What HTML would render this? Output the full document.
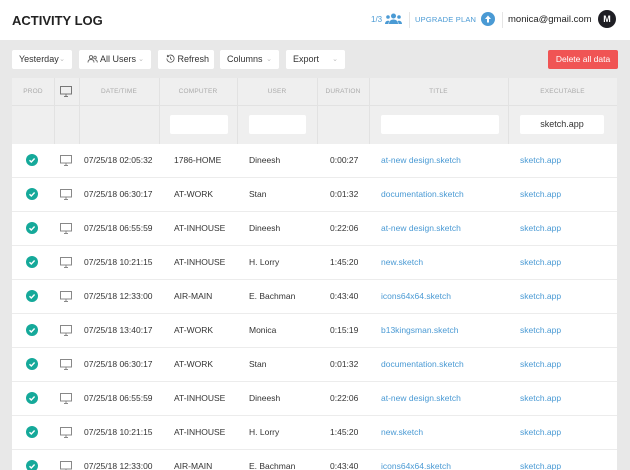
<!DOCTYPE html>
<html style="width:630px;height:470px;overflow:hidden"><head><meta charset="utf-8"><style>
*{box-sizing:border-box;margin:0;padding:0}
body{width:630px;height:470px;overflow:hidden;background:#e8e8e8;font-family:"Liberation Sans",sans-serif;position:relative}
.hdr{position:absolute;left:0;top:0;width:630px;height:40px;background:#fff}
.abs{position:absolute}
.btn{position:absolute;top:50px;height:19px;background:#fff;border-radius:2px;font-size:9px;color:#333;line-height:19px;padding-left:7px}
.btn .c{position:absolute;right:7px;top:0;color:#bbb;font-size:7px}
.tbl{position:absolute;left:12px;top:78px;width:605px;height:392px;background:#fff;overflow:hidden}
.thead{position:absolute;left:0;top:0;width:605px;height:66px;background:#efefef}
.th{position:absolute;top:0;height:27px;line-height:27px;font-size:6.5px;color:#aaa;text-align:center;letter-spacing:.2px}
.vl{position:absolute;top:0;width:1px;height:66px;background:#e2e2e2}
.inp{position:absolute;top:37px;height:19px;background:#fff;border-radius:2px;font-size:9px;text-align:center;line-height:19px;color:#333}
.row{position:absolute;left:0;width:605px;height:34px;border-bottom:1px solid #ececec;font-size:8.5px;color:#333}
.row span{position:absolute;top:0;line-height:33px}
.lk{color:#4a9ad4}
.chk{position:absolute;left:14px;top:10px;width:12px;height:12px;border-radius:50%;background:#15a99a}
</style></head><body>
<div class="hdr">
<div class="abs" style="left:12px;top:13px;font-size:13px;font-weight:bold;color:#222">ACTIVITY LOG</div>
<div class="abs" style="left:371px;top:15px;font-size:8px;color:#4a9ad4">1/3</div>
<svg class="abs" style="left:385px;top:13px" width="17" height="12" viewBox="0 0 17 12"><g fill="#4a9ad4"><circle cx="8.5" cy="3" r="2.5"/><circle cx="3" cy="4" r="1.8"/><circle cx="14" cy="4" r="1.8"/><path d="M4 11c0-3 2-4.5 4.5-4.5S13 8 13 11z"/><path d="M0 11c0-2 1.3-3.3 3-3.3 1 0 1.5.3 1.5.3-.7.8-1 2-1 3z"/><path d="M17 11c0-2-1.3-3.3-3-3.3-1 0-1.5.3-1.5.3.7.8 1 2 1 3z"/></g></svg>
<div class="abs" style="left:409px;top:12px;width:1px;height:16px;background:#e5e5e5"></div>
<div class="abs" style="left:415px;top:15px;font-size:7.5px;color:#4a9ad4;letter-spacing:.2px">UPGRADE PLAN</div>
<svg class="abs" style="left:481px;top:12px" width="14" height="14" viewBox="0 0 14 14"><circle cx="7" cy="7" r="7" fill="#4a9ad4"/><path d="M7 3.5L10 7H8v3.5H6V7H4z" fill="#fff"/></svg>
<div class="abs" style="left:502px;top:12px;width:1px;height:16px;background:#e5e5e5"></div>
<div class="abs" style="left:508px;top:14px;font-size:9.5px;color:#222">monica@gmail.com</div>
<div class="abs" style="left:598px;top:10px;width:18px;height:18px;border-radius:50%;background:#1e1e24;color:#fff;font-size:9px;font-weight:bold;text-align:center;line-height:18px">M</div>
</div>

<div class="btn" style="left:12px;width:60px">Yesterday<span class="c">⌄</span></div>
<div class="btn" style="left:79px;width:72px;padding-left:8px"><svg width="11" height="8" viewBox="0 0 11 8" style="vertical-align:-1px"><g fill="none" stroke="#666" stroke-width=".9"><circle cx="4" cy="2.2" r="1.6"/><path d="M1 7.5c0-2 1.3-3 3-3s3 1 3 3"/><circle cx="8" cy="2.5" r="1.3"/><path d="M8 4.8c1.3 0 2.3.8 2.3 2.7"/></g></svg> All Users<span class="c">⌄</span></div>
<div class="btn" style="left:158px;width:56px;padding-left:8px"><svg width="9" height="9" viewBox="0 0 10 10" style="vertical-align:-1px"><g fill="none" stroke="#555" stroke-width=".9"><path d="M2 2.5A4 4 0 1 1 1 5"/><path d="M5 3v2.3l1.5 1"/><path d="M1.5 1v2h2"/></g></svg> Refresh</div>
<div class="btn" style="left:220px;width:59px">Columns<span class="c">⌄</span></div>
<div class="btn" style="left:286px;width:59px">Export<span class="c">⌄</span></div>
<div class="btn" style="left:548px;width:70px;background:#f05454;color:#fff;text-align:center;padding:0;font-size:8.5px">Delete all data</div>

<div class="tbl">
<div class="thead">
<div class="th" style="left:0;width:42px">PROD</div>
<svg class="abs" style="left:48px;top:8px" width="12" height="11" viewBox="0 0 12 11"><rect x=".5" y=".5" width="11" height="7.5" fill="none" stroke="#777"/><path d="M4 10.5h4M6 8v2.5" stroke="#777"/></svg>
<div class="th" style="left:67px;width:80px">DATE/TIME</div>
<div class="th" style="left:147px;width:78px">COMPUTER</div>
<div class="th" style="left:225px;width:80px">USER</div>
<div class="th" style="left:305px;width:52px">DURATION</div>
<div class="th" style="left:357px;width:139px">TITLE</div>
<div class="th" style="left:496px;width:109px">EXECUTABLE</div>
<div class="vl" style="left:42px"></div><div class="vl" style="left:67px"></div><div class="vl" style="left:147px"></div><div class="vl" style="left:225px"></div><div class="vl" style="left:305px"></div><div class="vl" style="left:357px"></div><div class="vl" style="left:496px"></div>
<div class="abs" style="left:0;top:27px;width:605px;height:1px;background:#e2e2e2"></div>
<div class="inp" style="left:158px;width:58px"></div>
<div class="inp" style="left:237px;width:57px"></div>
<div class="inp" style="left:369px;width:118px"></div>
<div class="inp" style="left:508px;width:84px">sketch.app</div>
</div>
<div id="rows"></div>
</div>
<script>
var d=[["07/25/18 02:05:32","1786-HOME","Dineesh","0:00:27","at-new design.sketch"],["07/25/18 06:30:17","AT-WORK","Stan","0:01:32","documentation.sketch"],["07/25/18 06:55:59","AT-INHOUSE","Dineesh","0:22:06","at-new design.sketch"],["07/25/18 10:21:15","AT-INHOUSE","H. Lorry","1:45:20","new.sketch"],["07/25/18 12:33:00","AIR-MAIN","E. Bachman","0:43:40","icons64x64.sketch"],["07/25/18 13:40:17","AT-WORK","Monica","0:15:19","b13kingsman.sketch"],["07/25/18 06:30:17","AT-WORK","Stan","0:01:32","documentation.sketch"],["07/25/18 06:55:59","AT-INHOUSE","Dineesh","0:22:06","at-new design.sketch"],["07/25/18 10:21:15","AT-INHOUSE","H. Lorry","1:45:20","new.sketch"],["07/25/18 12:33:00","AIR-MAIN","E. Bachman","0:43:40","icons64x64.sketch"]];
var h="";d.forEach(function(r,i){h+='<div class="row" style="top:'+(66+i*34)+'px"><div class="chk"><svg width="12" height="12" viewBox="0 0 12 12"><path d="M3.5 6.2l1.8 1.8 3.3-3.5" fill="none" stroke="#fff" stroke-width="1.4"/></svg></div><svg style="position:absolute;left:48px;top:11px" width="12" height="11" viewBox="0 0 12 11"><rect x=".5" y=".5" width="11" height="7.5" fill="none" stroke="#888"/><path d="M4 10.5h4M6 8v2.5" stroke="#888"/></svg><span style="left:72px">'+r[0]+'</span><span style="left:162px">'+r[1]+'</span><span style="left:237px">'+r[2]+'</span><span style="left:318px">'+r[3]+'</span><span class="lk" style="left:369px">'+r[4]+'</span><span class="lk" style="left:508px">sketch.app</span></div>'});
document.getElementById("rows").innerHTML=h;
</script>
</body></html>
